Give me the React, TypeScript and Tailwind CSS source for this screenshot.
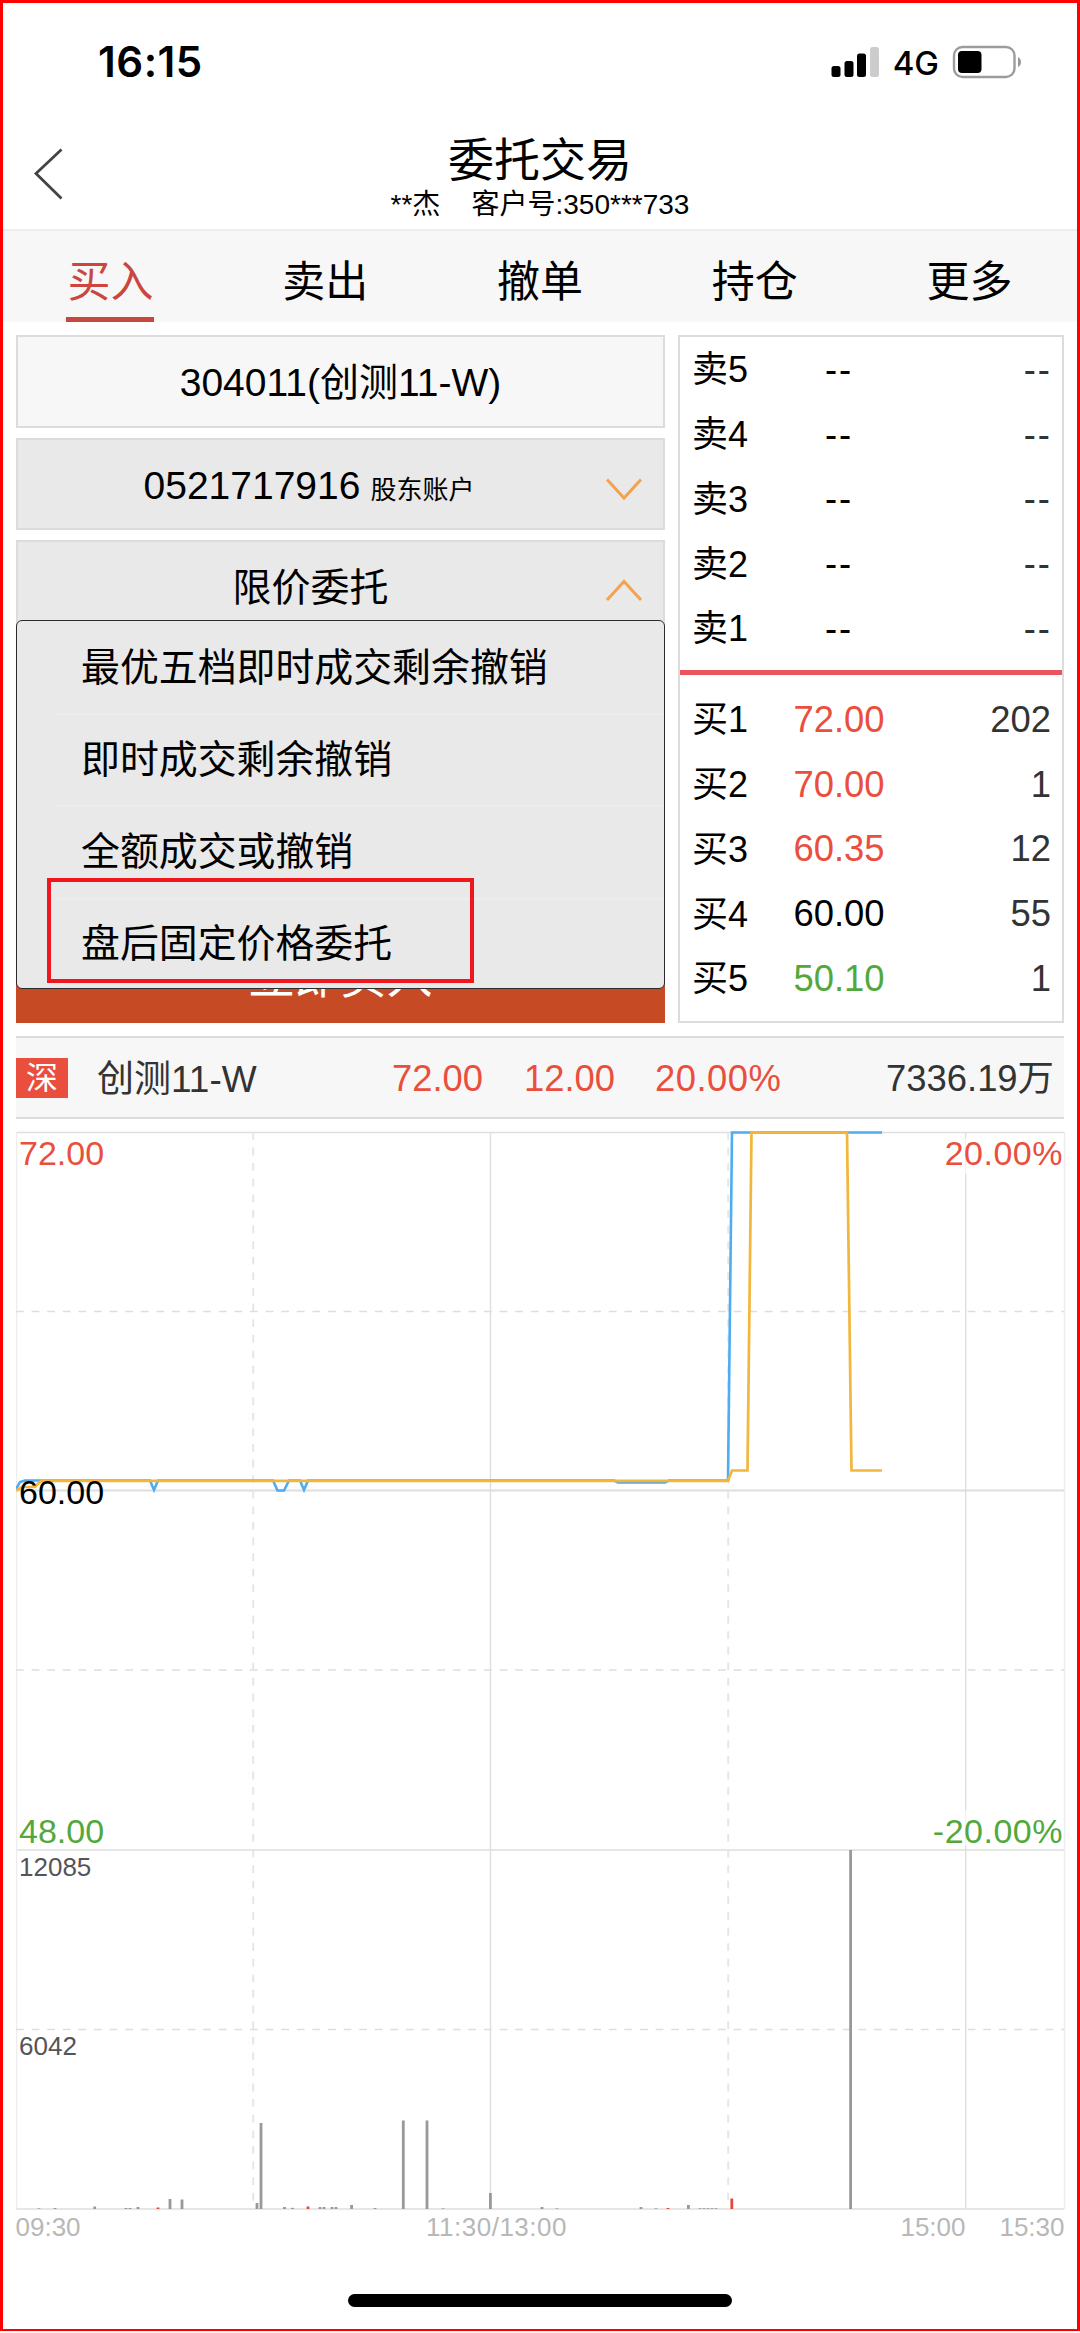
import type { ReactNode } from 'react'

type Tone = 'up' | 'down' | 'flat'

interface Quote {
  label: string
  price: string
  volume: string
  tone: Tone
}

const TABS = ['买入', '卖出', '撤单', '持仓', '更多']

const ORDER_TYPES = [
  '最优五档即时成交剩余撤销',
  '即时成交剩余撤销',
  '全额成交或撤销',
  '盘后固定价格委托',
]

const SELL: Quote[] = ['5', '4', '3', '2', '1'].map((n) => ({
  label: `卖${n}`,
  price: '--',
  volume: '--',
  tone: 'flat',
}))

const BUY: Quote[] = [
  { label: '买1', price: '72.00', volume: '202', tone: 'up' },
  { label: '买2', price: '70.00', volume: '1', tone: 'up' },
  { label: '买3', price: '60.35', volume: '12', tone: 'up' },
  { label: '买4', price: '60.00', volume: '55', tone: 'flat' },
  { label: '买5', price: '50.10', volume: '1', tone: 'down' },
]

const TONE_CLASS: Record<Tone, string> = {
  up: 'text-[#ea4e3d]',
  down: 'text-[#52a83b]',
  flat: 'text-black',
}

// x position, height, rising
const VOLUME_BARS: [number, number, boolean?][] = [
  [23, 0.7], [39, 1], [78.7, 2.5], [110, 1], [114, 1], [122, 2], [142, 1.5, true], [154, 10], [166, 9.5],
  [241, 6], [245, 86], [268.5, 2], [276.5, 1.2], [292, 2.5, true], [304, 2], [308, 2],
  [316, 2], [320, 2], [335.6, 4], [359, 1], [387.3, 88.5], [411, 88.5], [427, 0.7], [474.4, 16],
  [526, 2], [541, 0.7], [625, 2], [640, 0.7], [652, 1, true], [672.4, 4], [684, 0.8], [688, 0.8], [692, 0.8],
  [696, 0.8], [700, 0.8], [715.8, 10.5, true], [834.6, 359],
]

function StatusBar() {
  return (
    <div className="flex h-[118px] items-center justify-between pl-[95px] pr-[56px]">
      <span className="-mt-px font-[Inter] text-[42px] font-semibold leading-none tracking-[0.500px]">16:15</span>
      <div className="flex items-center">
        <svg width="50" height="32" viewBox="0 0 50 32">
          <rect x="0.500" y="20" width="9" height="11" rx="2.5" />
          <rect x="13.500" y="15" width="9" height="16" rx="2.5" />
          <rect x="26" y="7.500" width="9" height="23.500" rx="2.5" />
          <rect x="39" y="1" width="9" height="30" rx="2.5" fill="#ccc" />
        </svg>
        <span className="ml-3 mt-[2px] font-[Inter] text-[33px] font-medium leading-none">4G</span>
        <svg className="ml-3" width="70" height="34" viewBox="0 0 70 34">
          <rect x="3" y="2" width="60.500" height="30" rx="8.500" fill="none" stroke="#9c9c9c" strokeWidth="2.400" />
          <rect x="7" y="6" width="23.500" height="22" rx="4" />
          <path d="M67 12 Q70 13.500 70 17 T67 22 Z" fill="#999" />
        </svg>
      </div>
    </div>
  )
}

function Header() {
  return (
    <div className="grid h-[108px] grid-cols-[120px_1fr_120px]">
      <svg className="ml-[30px] mt-[25px]" width="34" height="54" viewBox="0 0 34 54" fill="none" stroke="#444" strokeWidth="2.800">
        <path d="M28.500 3.500 L3 27.500 L28.500 52.500" />
      </svg>
      <div className="flex flex-col items-center">
        <h1 className="mt-[13px] text-[46px] leading-[52px]">委托交易</h1>
        <p className="mt-[2px] whitespace-pre text-[28px] leading-[34px]">{'**杰    客户号:350***733'}</p>
      </div>
    </div>
  )
}

function TabBar() {
  return (
    <div className="grid h-[93px] grid-cols-5 border-t-2 border-[#ededed] bg-[#f7f7f7]">
      {TABS.map((tab, i) => (
        <div key={tab} className="flex justify-center">
          <span
            className={
              i === 0
                ? 'flex w-[88px] items-center justify-center border-b-[5px] border-[#cb463f] pt-[16px] text-[43px] leading-none text-[#cb463f]'
                : 'flex w-[88px] items-center justify-center pt-[11px] text-[43px] leading-none'
            }
          >
            {tab}
          </span>
        </div>
      ))}
    </div>
  )
}

function Chevron({ up }: { up?: boolean }) {
  return (
    <svg className="mr-[20px] mt-[10px]" width="38" height="24" viewBox="0 0 38 24" fill="none" stroke="#f4a24f" strokeWidth="3">
      <path d={up ? 'M2 21 L19 2.500 L36 21' : 'M2 2.500 L19 21 L36 2.500'} />
    </svg>
  )
}

function SelectBox({ children, up }: { children: ReactNode; up?: boolean }) {
  return (
    <div className="flex h-[92.500px] items-center border-[2px] border-[#dcdcdc] bg-[#e9e9e9]">
      <div className="flex flex-1 items-baseline justify-center pr-[2px] pt-[3px] text-[39px] leading-none">{children}</div>
      <Chevron up={up} />
    </div>
  )
}

function OrderForm() {
  return (
    <div className="relative flex w-[649px] flex-col gap-[10px]">
      <div className="flex h-[92.500px] items-center justify-center border-[2px] border-[#dcdcdc] bg-[#f7f7f7] pt-[3px] text-[39px] leading-none">
        304011(创测11-W)
      </div>
      <SelectBox>
        0521717916<span className="ml-[10px] mr-[3px] text-[26px]">股东账户</span>
      </SelectBox>
      <SelectBox up>限价委托</SelectBox>
      <div className="mt-auto flex h-[92px] items-center justify-center bg-[#c64a23] text-[46px] leading-none text-white">
        立即买入
      </div>

      <div className="absolute inset-x-0 top-[285px] h-[369px] rounded-md border-[1.500px] border-[#2b2b2b] bg-[#e9e9e9] pl-[40px]">
        {ORDER_TYPES.map((type, i) => (
          <div
            key={type}
            className={`flex h-[92.200px] items-center pl-[24px] text-[38.900px] leading-none ${i > 0 ? 'border-t-2 border-[#ededed]' : 'pt-[2px]'}`}
          >
            {type}
          </div>
        ))}
      </div>
      <div className="absolute left-[31px] top-[543px] h-[105px] w-[427px] border-4 border-[#f0161e]" />
    </div>
  )
}

function QuoteRow({ quote }: { quote: Quote }) {
  return (
    <div className="grid h-[64.870px] grid-cols-[89px_116px_1fr] items-center pl-[12px] pr-[11px] pt-[1px] text-[36.400px] leading-none">
      <span className="text-[36px]">{quote.label}</span>
      <span className={`text-center ${TONE_CLASS[quote.tone]} ${quote.price === '--' ? 'tracking-[2px]' : ''}`}>
        {quote.price}
      </span>
      <span className={`text-right text-[#333] ${quote.volume === '--' ? '-mr-px tracking-[2px]' : ''}`}>{quote.volume}</span>
    </div>
  )
}

function OrderBook() {
  return (
    <div className="h-[688px] w-[386px] border-[2px] border-[#dcdcdc] bg-white">
      <div className="h-[333px]">
        {SELL.map((q) => (
          <QuoteRow key={q.label} quote={q} />
        ))}
      </div>
      <div className="h-[5px] bg-[#e9545e]" />
      <div className="pt-[12px]">
        {BUY.map((q) => (
          <QuoteRow key={q.label} quote={q} />
        ))}
      </div>
    </div>
  )
}

function StockSummary() {
  return (
    <div className="mx-[13px] mt-[13px] flex h-[83px] items-center border-y-[2.500px] border-[#dcdcdc] bg-[#f7f7f7] pr-[10px] text-[36.400px] leading-none text-[#333]">
      <span className="flex h-10 w-[52px] items-center justify-center bg-[#ea4e3d] text-[32px] text-white">深</span>
      <span className="ml-[29px] w-[295px] pt-1 text-[37px]">创测11-W</span>
      <span className="w-[132px] pt-1 text-[#ea4e3d]">72.00</span>
      <span className="w-[131px] pt-1 text-[#ea4e3d]">12.00</span>
      <span className="pt-1 tracking-[0.500px] text-[#ea4e3d]">20.00%</span>
      <span className="ml-auto pt-1">7336.19万</span>
    </div>
  )
}

function MinuteChart() {
  return (
    <svg
      className="ml-[13px] mt-[12px]"
      width="1050"
      height="1110"
      viewBox="0 0 1050 1110"
      fill="none"
      fontFamily='"Liberation Sans", Arial, sans-serif'
    >
      <g transform="translate(0 1)">
        <g stroke="#dedede" strokeWidth="1.400">
          <path d="M0 0.500 H1048 M0 718 H1048 M0 1077 H1048 M474.500 0 V1077 M949.700 0 V1077" />
          <path d="M0 358.500 H1048" strokeWidth="2" />
          <path d="M0.500 0 V1077 M1048.500 0 V1077" stroke="#ededed" strokeWidth="1.500" />
          <path d="M0 179.500 H1048 M0 538 H1048 M0 897.500 H1048" strokeDasharray="7.800 7.800" />
          <path d="M237.200 0 V1077 M712.200 0 V1077" stroke="#e6e6e6" strokeWidth="2" strokeDasharray="7.800 7.800" />
        </g>

        <path
          d="M0 357 L4 350 L9 348.500 H134 L138 358 L142 348.500 H257 L261.500 358.500 H268 L273 348.500 H284 L288 358 L292 348.500 H598 L602 350.500 H649 L653 348.500 H712 L716 0.500 H866"
          stroke="#4dacf2"
          strokeWidth="2.600"
        />
        <path
          d="M0 358.500 L6 355 H19 L25 348.800 H712 L716 338.500 H731.500 L735.500 0.500 H831 L835.500 338.500 H866"
          stroke="#f2b63c"
          strokeWidth="2.700"
        />

        {VOLUME_BARS.map(([x, h, rising]) => (
          <rect key={x} x={x - 1.4} y={1077 - h} width="2.800" height={h} fill={rising ? '#e8463c' : '#999'} />
        ))}

        <rect x="916" y="6" width="131" height="36" fill="#fff" opacity="0.6" />
        <rect x="916" y="678" width="131" height="36" fill="#fff" opacity="0.6" />

        <g fontSize="34">
          <text x="3" y="33" fill="#ea4e3d">72.00</text>
          <text x="3" y="372" fill="#000">60.00</text>
          <text x="3" y="711" fill="#52a83b">48.00</text>
          <text x="1047" y="33" fill="#ea4e3d" textAnchor="end" letterSpacing="0.500">20.00%</text>
          <text x="1047" y="711" fill="#52a83b" textAnchor="end" letterSpacing="0.500">-20.00%</text>
        </g>
        <g fontSize="26" fill="#555">
          <text x="3" y="743.500">12085</text>
          <text x="3" y="923">6042</text>
        </g>
        <g fontSize="26" fill="#b8b8b8">
          <text x="-0.500" y="1103.500">09:30</text>
          <text x="480.500" y="1103.500" textAnchor="middle" letterSpacing="0.500">11:30/13:00</text>
          <text x="949.500" y="1103.500" textAnchor="end">15:00</text>
          <text x="1048.500" y="1103.500" textAnchor="end">15:30</text>
        </g>
      </g>
    </svg>
  )
}

export default function App() {
  return (
    <div className="flex h-[2331px] w-[1080px] flex-col overflow-hidden border-[3px] border-b-2 border-[#fe0000] bg-white font-['Liberation_Sans','Noto_Sans_CJK_SC',sans-serif] text-black">
      <StatusBar />
      <Header />
      <TabBar />
      <div className="mx-[13px] mt-[13px] flex h-[688px] justify-between">
        <OrderForm />
        <OrderBook />
      </div>
      <StockSummary />
      <MinuteChart />
      <div className="mx-auto mt-[53px] h-[13px] w-[384px] rounded-full bg-black" />
    </div>
  )
}
